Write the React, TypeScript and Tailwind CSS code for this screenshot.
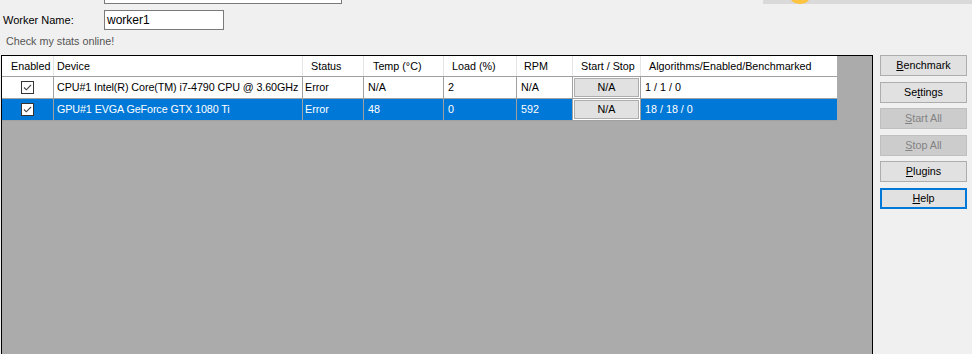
import React from "react";

const cols = [
  { w: 52, label: "Enabled", hp: "pl-[9px]" },
  { w: 249, label: "Device", hp: "pl-[3px]" },
  { w: 61, label: "Status", hp: "pl-[8px]" },
  { w: 80, label: "Temp (°C)", hp: "pl-[9px]" },
  { w: 73, label: "Load (%)", hp: "pl-[8px]" },
  { w: 56, label: "RPM", hp: "pl-[7px]" },
  { w: 68, label: "Start / Stop", hp: "pl-[8px]" },
  { w: 196, label: "Algorithms/Enabled/Benchmarked", hp: "pl-[8px]" },
];

const rows = [
  { device: "CPU#1 Intel(R) Core(TM) i7-4790 CPU @ 3.60GHz", status: "Error", temp: "N/A", load: "2", rpm: "N/A", algo: "1 / 1 / 0", sel: false },
  { device: "GPU#1 EVGA GeForce GTX 1080 Ti", status: "Error", temp: "48", load: "0", rpm: "592", algo: "18 / 18 / 0", sel: true },
];

function Check() {
  return (
    <div className="w-[13px] h-[13px] border border-[#333333] bg-white flex items-center justify-center">
      <svg width="11" height="11" viewBox="0 0 11 11">
        <path d="M2 5.5 L4.3 7.8 L9 3" stroke="#444444" strokeWidth="1.1" fill="none" />
      </svg>
    </div>
  );
}

function Btn({ first, rest, pre = "", disabled = false, focused = false }: { first: string; rest: string; pre?: string; disabled?: boolean; focused?: boolean }) {
  const cls = disabled
    ? "bg-[#cccccc] border-[#bfbfbf] text-[#838383] border"
    : focused
    ? "bg-[#e1e1e1] border-[#0078d7] border-2 text-black"
    : "bg-[#e1e1e1] border-[#adadad] border text-black";
  return (
    <div className={`w-[87px] h-[21px] flex items-center justify-center ${cls}`}>
      <span>
        {pre}
        <span className="underline underline-offset-1">{first}</span>
        {rest}
      </span>
    </div>
  );
}

export default function App() {
  return (
    <div
      className="w-[972px] h-[354px] bg-[#f0f0f0] overflow-hidden text-[10.75px] text-black"
      style={{ fontFamily: '"Liberation Sans", Arial, sans-serif' }}
    >
      {/* row 1: clipped top controls */}
      <div className="h-[10px] flex items-start">
        <div className="ml-[104px] w-[238px] h-[24px] -mt-[20px] border border-[#7a7a7a] bg-white" />
        <div className="flex-1" />
        <div className="w-[209px] h-[4px] bg-[#d9d9d9] relative overflow-hidden">
          <div className="absolute left-[26px] -top-[16px] w-[22px] h-[20px] rounded-full bg-[#fcc440]" />
        </div>
      </div>
      {/* row 2 */}
      <div className="flex items-center h-[20px]">
        <div className="w-[104px] pl-[3px] text-[11px]">Worker Name:</div>
        <div className="w-[120px] h-[20px] border border-[#7a7a7a] bg-white flex items-center pl-[2px] text-[12px]">worker1</div>
      </div>
      {/* row 3 */}
      <div className="h-[25px] pl-[6px] pt-[3px] text-[#555555]">Check my stats online!</div>

      {/* main */}
      <div className="flex items-start">
        <div className="ml-[1px] w-[872px] h-[320px] border border-black bg-[#ababab]">
          <div className="w-[835px]">
            {/* header */}
            <div className="flex h-[20px] bg-white">
              {cols.map((c, i) => (
                <div
                  key={i}
                  style={{ width: c.w }}
                  className={`h-full flex items-center whitespace-nowrap ${c.hp} ${i < cols.length - 1 ? "border-r border-[#e5e5e5]" : ""}`}
                >
                  {c.label}
                </div>
              ))}
            </div>
            {rows.map((r, ri) => {
              const bg = r.sel ? "bg-[#0078d7] text-white" : "bg-white text-black";
              const cells = [
                <div className="w-full flex justify-center"><Check /></div>,
                <span className="pl-[3px] tracking-[-0.1px]">{r.device}</span>,
                <span className="pl-[2px]">{r.status}</span>,
                <span className="pl-[4px]">{r.temp}</span>,
                <span className="pl-[4px]">{r.load}</span>,
                <span className="pl-[4px]">{r.rpm}</span>,
                <div className="w-full px-[1px]">
                  <div className="h-[19px] bg-[#e1e1e1] border border-[#adadad] text-black flex items-center justify-center">N/A</div>
                </div>,
                <span className="pl-[4px]">{r.algo}</span>,
              ];
              return (
                <div key={ri} className="flex h-[22px] border-t border-[#a0a0a0]">
                  {cols.map((c, i) => (
                    <div
                      key={i}
                      style={{ width: c.w }}
                      className={`h-full flex items-center whitespace-nowrap overflow-hidden ${i === 6 ? "bg-white" : bg} ${i < cols.length - 1 ? "border-r border-[#a0a0a0]" : ""}`}
                    >
                      {cells[i]}
                    </div>
                  ))}
                </div>
              );
            })}
            <div className="h-[1px] bg-[#a0a0a0]" />
          </div>
        </div>
        <div className="ml-[7px] flex flex-col gap-[5.5px]">
          <Btn first="B" rest="enchmark" />
          <Btn pre="Se" first="t" rest="tings" />
          <Btn first="S" rest="tart All" disabled />
          <Btn first="S" rest="top All" disabled />
          <Btn first="P" rest="lugins" />
          <Btn first="H" rest="elp" focused />
        </div>
      </div>
    </div>
  );
}
